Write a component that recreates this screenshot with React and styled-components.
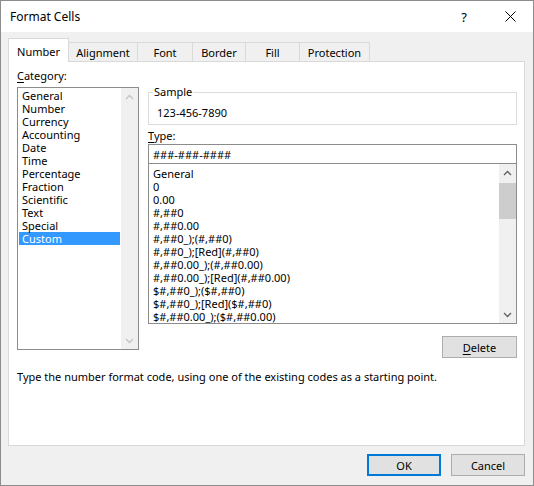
import React from "react";
import styled, { createGlobalStyle } from "styled-components";

const Global = createGlobalStyle`
  html, body { margin: 0; padding: 0; background: #ffffff; }
  * { box-sizing: border-box; }
`;

const Window = styled.div`
  width: 534px;
  height: 486px;
  border: 1px solid #8c8c8c;
  display: flex;
  flex-direction: column;
  background: #f0f0f0;
  font-family: "Noto Sans", "Open Sans", sans-serif;
  font-size: 11px;
  color: #000;
`;

const TitleBar = styled.div`
  height: 31px;
  background: #ffffff;
  display: flex;
  align-items: center;
  padding-left: 9px;
`;

const Title = styled.div`
  font-size: 12px;
  line-height: 16px;
  margin-top: 1px;
`;

const TitleButtons = styled.div`
  margin-left: auto;
  display: flex;
  height: 100%;
`;

const TitleButton = styled.div`
  width: 46px;
  height: 100%;
  display: flex;
  align-items: center;
  justify-content: center;
  font-size: 13px;
`;

const Body = styled.div`
  flex: 1;
  display: flex;
  flex-direction: column;
  padding: 6px 8px 9px 7px;
`;

const TabRow = styled.div`
  display: flex;
  align-items: flex-end;
  height: 23px;
`;

const Tab = styled.div`
  position: relative;
  width: ${(p) => p.$w}px;
  height: ${(p) => (p.$active ? 24 : 19)}px;
  margin-bottom: ${(p) => (p.$active ? -1 : 0)}px;
  margin-left: ${(p) => (p.$first ? 0 : -1)}px;
  z-index: ${(p) => (p.$active ? 2 : 1)};
  background: ${(p) => (p.$active ? "#ffffff" : "#f0f0f0")};
  border: 1px solid #d9d9d9;
  border-bottom: none;
  display: flex;
  align-items: ${(p) => (p.$active ? "flex-start" : "center")};
  justify-content: center;
  padding-top: ${(p) => (p.$active ? 5 : 1)}px;
  line-height: 15px;
`;

const Panel = styled.div`
  height: 385px;
  background: #ffffff;
  border: 1px solid #d9d9d9;
  padding: 6px 7px 0 8px;
  display: flex;
  flex-direction: column;
`;

const Columns = styled.div`
  display: flex;
  gap: 9px;
`;

const LeftCol = styled.div`
  width: 122px;
  display: flex;
  flex-direction: column;
`;

const RightCol = styled.div`
  width: 369px;
  display: flex;
  flex-direction: column;
`;

const Label = styled.div`
  line-height: 16px;
  margin-top: ${(p) => p.$mt || 0}px;
  u { text-decoration: underline; text-underline-offset: 2px; }
`;

const ListBox = styled.div`
  height: ${(p) => p.$h}px;
  margin-top: ${(p) => p.$mt || 0}px;
  border: 1px solid #8c8c8c;
  background: #fff;
  display: flex;
  overflow: hidden;
`;

const Items = styled.div`
  flex: 1;
  padding: ${(p) => p.$pad};
  overflow: hidden;
`;

const Item = styled.div`
  height: 13px;
  line-height: 13px;
  padding-left: ${(p) => p.$pl}px;
  white-space: nowrap;
  background: ${(p) => (p.$selected ? "#3399ff" : "transparent")};
  color: ${(p) => (p.$selected ? "#ffffff" : "#000")};
`;

const ScrollBar = styled.div`
  width: 17px;
  background: #f0f0f0;
  display: flex;
  flex-direction: column;
`;

const ScrollArrow = styled.div`
  height: 17px;
  display: flex;
  align-items: center;
  justify-content: center;
  flex-shrink: 0;
`;

const ScrollTrack = styled.div`
  flex: 1;
  display: flex;
  flex-direction: column;
  padding-top: 2px;
`;

const Thumb = styled.div`
  height: ${(p) => p.$h}px;
  background: #cdcdcd;
`;

const Group = styled.fieldset`
  margin: 18px 0 0 0;
  padding: 7px 0 3px 8px;
  border: 1px solid #dcdcdc;
  min-width: 0;
`;

const Legend = styled.legend`
  padding: 0 1px;
  margin-left: -4px;
  line-height: 12px;
`;

const SampleText = styled.div`
  line-height: 16px;
`;

const TypeInput = styled.div`
  height: 20px;
  border: 1px solid #8c8c8c;
  padding-left: 4px;
  display: flex;
  align-items: center;
  background: #fff;
`;

const Button = styled.div`
  width: ${(p) => p.$w || 74}px;
  height: 22px;
  background: #e1e1e1;
  border: ${(p) => (p.$default ? "2px solid #0078d7" : "1px solid #adadad")};
  display: flex;
  align-items: center;
  justify-content: center;
  u { text-decoration: underline; text-underline-offset: 2px; }
`;

const DeleteRow = styled.div`
  display: flex;
  justify-content: flex-end;
  margin-top: 12px;
`;

const Hint = styled.div`
  line-height: 16px;
  margin-top: 11px;
`;

const Footer = styled.div`
  margin-top: 8px;
  display: flex;
  justify-content: flex-end;
  gap: 10px;
`;

const Chevron = ({ up, color }) => (
  <svg width="9" height="6" viewBox="0 0 9 6">
    <path
      d={up ? "M1 5 L4.5 1.5 L8 5" : "M1 1 L4.5 4.5 L8 1"}
      fill="none"
      stroke={color}
      strokeWidth="1.3"
    />
  </svg>
);

const CloseIcon = () => (
  <svg width="11" height="11" viewBox="0 0 11 11">
    <path d="M0.5 0.5 L10.5 10.5 M10.5 0.5 L0.5 10.5" stroke="#000" strokeWidth="1" fill="none" />
  </svg>
);

const tabs = [
  { label: "Number", w: 61 },
  { label: "Alignment", w: 70 },
  { label: "Font", w: 56 },
  { label: "Border", w: 54 },
  { label: "Fill", w: 55 },
  { label: "Protection", w: 71 },
];

const categories = [
  "General",
  "Number",
  "Currency",
  "Accounting",
  "Date",
  "Time",
  "Percentage",
  "Fraction",
  "Scientific",
  "Text",
  "Special",
  "Custom",
];

const formats = [
  "General",
  "0",
  "0.00",
  "#,##0",
  "#,##0.00",
  "#,##0_);(#,##0)",
  "#,##0_);[Red](#,##0)",
  "#,##0.00_);(#,##0.00)",
  "#,##0.00_);[Red](#,##0.00)",
  "$#,##0_);($#,##0)",
  "$#,##0_);[Red]($#,##0)",
  "$#,##0.00_);($#,##0.00)",
];

export default function App() {
  return (
    <>
      <Global />
      <Window>
        <TitleBar>
          <Title>Format Cells</Title>
          <TitleButtons>
            <TitleButton>?</TitleButton>
            <TitleButton>
              <CloseIcon />
            </TitleButton>
          </TitleButtons>
        </TitleBar>
        <Body>
          <TabRow>
            {tabs.map((t, i) => (
              <Tab key={t.label} $w={t.w} $active={i === 0} $first={i === 0}>
                {t.label}
              </Tab>
            ))}
          </TabRow>
          <Panel>
            <Columns>
              <LeftCol>
                <Label>
                  <u>C</u>ategory:
                </Label>
                <ListBox $h={263} $mt={3}>
                  <Items $pad="1px">
                    {categories.map((c) => (
                      <Item key={c} $pl={3} $selected={c === "Custom"}>
                        {c}
                      </Item>
                    ))}
                  </Items>
                  <ScrollBar>
                    <ScrollArrow>
                      <Chevron up color="#c4c4c4" />
                    </ScrollArrow>
                    <ScrollTrack />
                    <ScrollArrow>
                      <Chevron color="#c4c4c4" />
                    </ScrollArrow>
                  </ScrollBar>
                </ListBox>
              </LeftCol>
              <RightCol>
                <Group>
                  <Legend>Sample</Legend>
                  <SampleText>123-456-7890</SampleText>
                </Group>
                <Label $mt={3}>
                  <u>T</u>ype:
                </Label>
                <TypeInput>###-###-####</TypeInput>
                <ListBox $h={161} $mt={-1}>
                  <Items $pad="3px 0 0 0">
                    {formats.map((f) => (
                      <Item key={f} $pl={4}>
                        {f}
                      </Item>
                    ))}
                  </Items>
                  <ScrollBar>
                    <ScrollArrow>
                      <Chevron up color="#606060" />
                    </ScrollArrow>
                    <ScrollTrack>
                      <Thumb $h={36} />
                    </ScrollTrack>
                    <ScrollArrow>
                      <Chevron color="#606060" />
                    </ScrollArrow>
                  </ScrollBar>
                </ListBox>
                <DeleteRow>
                  <Button $w={75}>
                    <span>
                      <u>D</u>elete
                    </span>
                  </Button>
                </DeleteRow>
              </RightCol>
            </Columns>
            <Hint>Type the number format code, using one of the existing codes as a starting point.</Hint>
          </Panel>
          <Footer>
            <Button $default>OK</Button>
            <Button>Cancel</Button>
          </Footer>
        </Body>
      </Window>
    </>
  );
}
